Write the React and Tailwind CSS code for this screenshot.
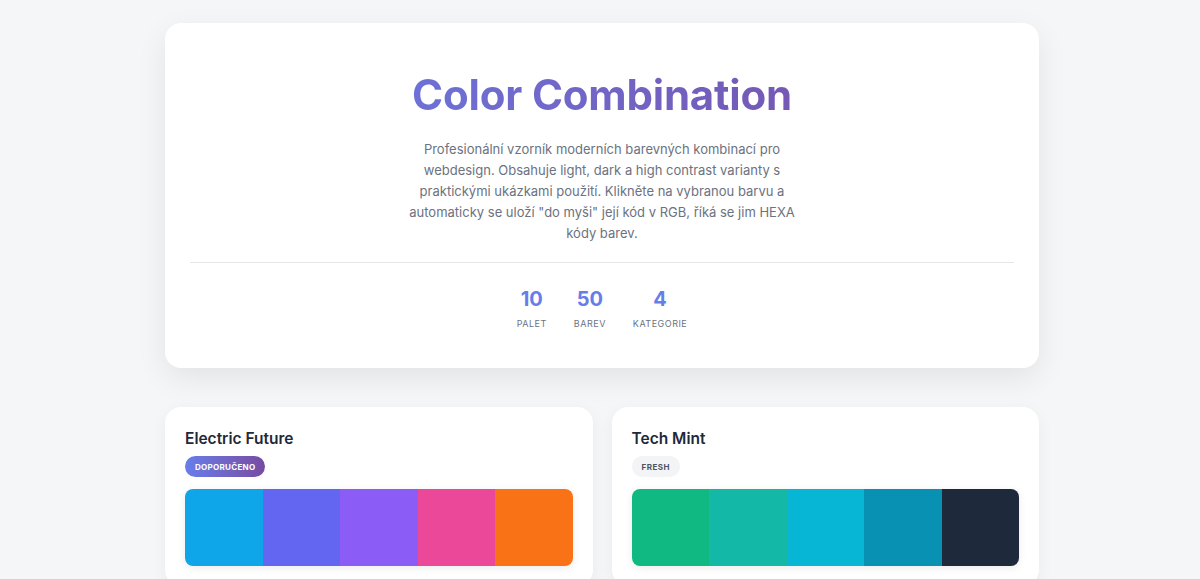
import React from "react";

const stats = [
  { value: "10", label: "Palet" },
  { value: "50", label: "Barev" },
  { value: "4", label: "Kategorie" },
];

const palettes = [
  {
    name: "Electric Future",
    badge: "Doporučeno",
    featured: true,
    colors: ["#0ea5e9", "#6366f1", "#8b5cf6", "#ec4899", "#f97316"],
  },
  {
    name: "Tech Mint",
    badge: "Fresh",
    featured: false,
    colors: ["#10b981", "#14b8a6", "#06b6d4", "#0891b2", "#1e293b"],
  },
];

// Hero header
function Hero() {
  return (
    <div className="bg-white rounded-2xl shadow-[0_10px_30px_rgba(0,0,0,0.08)] px-[25px] pt-12 pb-[37px] text-center">
      <h1 className="text-[42px] leading-[48px] font-bold tracking-[-0.2px] bg-gradient-to-r from-[#667eea] to-[#764ba2] bg-clip-text text-transparent">
        Color Combination
      </h1>
      <p className="mt-5 mx-auto max-w-[400px] text-[13px] leading-[21px] text-[#6b7280]">
        Profesionální vzorník moderních barevných kombinací pro webdesign.
        Obsahuje light, dark a high contrast varianty s praktickými ukázkami
        použití. Klikněte na vybranou barvu a automaticky se uloží "do myši"
        její kód v RGB, říká se jim HEXA kódy barev.
      </p>
      <div className="mt-[18px] border-t border-[#e5e7eb] pt-[22px] flex justify-center gap-[27px]">
        {stats.map((s) => (
          <div key={s.label} className="flex flex-col items-center">
            <span className="text-[20px] leading-[28px] font-bold text-[#667eea]">
              {s.value}
            </span>
            <span className="mt-[3px] text-[9px] leading-[15px] uppercase tracking-[0.5px] text-[#6b7280]">
              {s.label}
            </span>
          </div>
        ))}
      </div>
    </div>
  );
}

function PaletteCard({ palette }) {
  return (
    <div className="bg-white rounded-2xl shadow-[0_4px_16px_rgba(0,0,0,0.05)] p-5">
      <h3 className="text-[15.5px] leading-6 font-semibold text-[#1f2937]">
        {palette.name}
      </h3>
      <span
        className={
          palette.featured
            ? "mt-[5px] inline-flex items-center h-[21px] px-[10px] rounded-full bg-gradient-to-r from-[#667eea] to-[#764ba2] text-white text-[8px] font-bold uppercase tracking-[0.3px]"
            : "mt-[5px] inline-flex items-center h-[21px] px-[10px] rounded-full bg-[#f3f4f6] text-[#4b5563] text-[8px] font-bold uppercase tracking-[0.5px]"
        }
      >
        {palette.badge}
      </span>
      <div className="mt-3 flex h-[77px] rounded-lg overflow-hidden shadow-[0_2px_8px_rgba(0,0,0,0.08)]">
        {palette.colors.map((c) => (
          <div key={c} className="flex-1" style={{ backgroundColor: c }} />
        ))}
      </div>
    </div>
  );
}

export default function App() {
  return (
    <div
      className="min-h-screen bg-[#f5f6f8] pt-[23px] pb-10 pl-1 flex justify-center"
      style={{ fontFamily: "Inter, 'Noto Sans', sans-serif" }}
    >
      <div className="w-[874px]">
        <Hero />
        <div className="mt-[39px] grid grid-cols-2 gap-[19px]">
          {palettes.map((p) => (
            <PaletteCard key={p.name} palette={p} />
          ))}
        </div>
      </div>
    </div>
  );
}
